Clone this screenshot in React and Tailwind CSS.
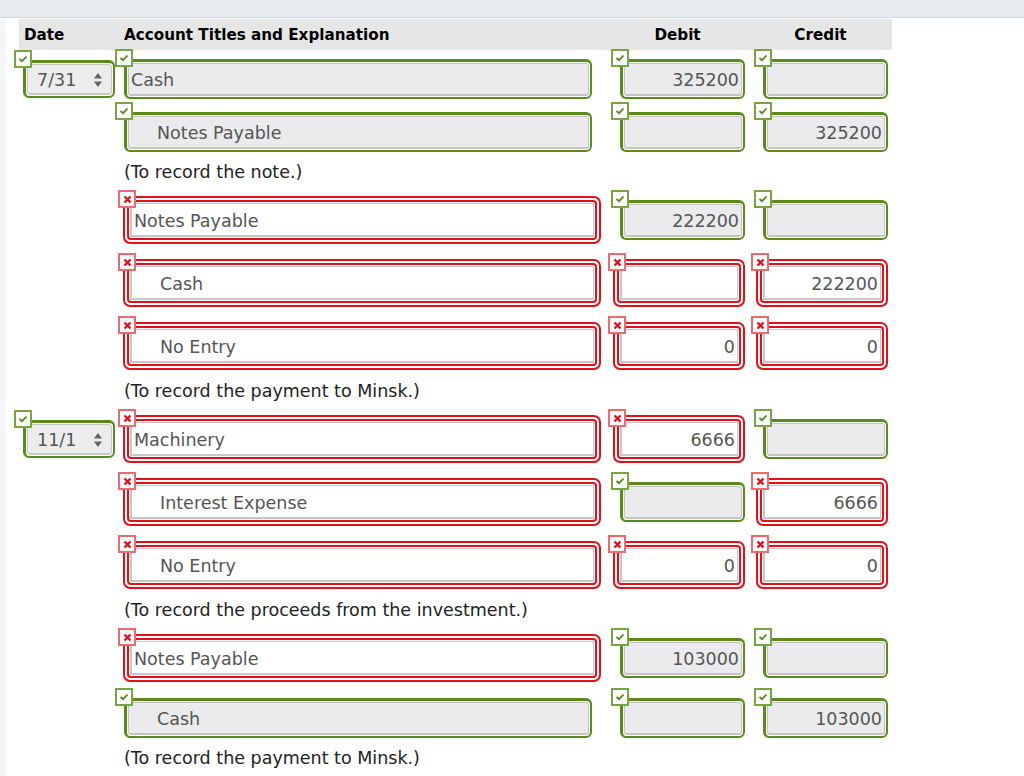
import React from 'react';

const rows = [
  { date: '7/31', mt: 'mt-[9px]', acct: { ok: true, text: 'Cash' }, debit: { ok: true, text: '325200' }, credit: { ok: true, text: '' } },
  { mt: 'mt-[13px]', acct: { ok: true, text: 'Notes Payable', indent: true }, debit: { ok: true, text: '' }, credit: { ok: true, text: '325200' } },
  { note: '(To record the note.)', mt: 'mt-[10px]' },
  { mt: 'mt-[14px]', acct: { ok: false, text: 'Notes Payable' }, debit: { ok: true, text: '222200' }, credit: { ok: true, text: '' } },
  { mt: 'mt-[15px]', acct: { ok: false, text: 'Cash', indent: true }, debit: { ok: false, text: '' }, credit: { ok: false, text: '222200' } },
  { mt: 'mt-[15px]', acct: { ok: false, text: 'No Entry', indent: true }, debit: { ok: false, text: '0' }, credit: { ok: false, text: '0' } },
  { note: '(To record the payment to Minsk.)', mt: 'mt-[11px]' },
  { date: '11/1', mt: 'mt-[14px]', acct: { ok: false, text: 'Machinery' }, debit: { ok: false, text: '6666' }, credit: { ok: true, text: '' } },
  { mt: 'mt-[15px]', acct: { ok: false, text: 'Interest Expense', indent: true }, debit: { ok: true, text: '' }, credit: { ok: false, text: '6666' } },
  { mt: 'mt-[15px]', acct: { ok: false, text: 'No Entry', indent: true }, debit: { ok: false, text: '0' }, credit: { ok: false, text: '0' } },
  { note: '(To record the proceeds from the investment.)', mt: 'mt-[11px]' },
  { mt: 'mt-[14px]', acct: { ok: false, text: 'Notes Payable' }, debit: { ok: true, text: '103000' }, credit: { ok: true, text: '' } },
  { mt: 'mt-[16px]', acct: { ok: true, text: 'Cash', indent: true }, debit: { ok: true, text: '' }, credit: { ok: true, text: '103000' } },
  { note: '(To record the payment to Minsk.)', mt: 'mt-[10px]' },
];

function Badge({ ok, pos }) {
  return (
    <span
      className={`absolute ${pos} z-10 flex h-[18px] w-[18px] items-center justify-center bg-white border-2 ${
        ok ? 'border-[#78a544]' : 'border-[#ec6a70]'
      }`}
    >
      {ok ? (
        <svg width="10" height="8" viewBox="0 0 10 8">
          <polyline points="1.5,4 4,6.2 8.5,1.5" fill="none" stroke="#4f8a18" strokeWidth="1.8" />
        </svg>
      ) : (
        <svg width="9" height="9" viewBox="0 0 9 9">
          <path d="M1.5 1.5 L7.5 7.5 M7.5 1.5 L1.5 7.5" stroke="#e3101a" strokeWidth="2.4" />
        </svg>
      )}
    </span>
  );
}

function Field({ ok, text, indent, right, wGreen, wRed }) {
  const pad = indent ? 'pl-[28px]' : right ? 'justify-end pr-[2px]' : 'pl-[2px]';
  if (ok) {
    return (
      <div className={`relative h-[40px] ${wGreen} rounded-[6px] border-t-[3px] border-l-[3px] border-r-2 border-b-2 border-[#5a8c1c] p-px`}>
        <Badge ok pos="-left-[12px] -top-[13px]" />
        <div className={`flex h-full items-center rounded-[3px] border border-b-2 border-[#c4c4c6] bg-[#ebebed] pt-[3px] text-[#555] ${pad}`}>
          {text}
        </div>
      </div>
    );
  }
  return (
    <div className={`relative h-[48px] ${wRed} rounded-[7px] border-2 border-[#e3101a] bg-white p-[2px]`}>
      <Badge pos="-left-[7px] -top-[8px]" />
      <div className="h-full rounded-[4px] border-2 border-[#e3101a] p-px">
        <div className={`flex h-full items-center border border-l-2 border-b-2 border-[#c8c8c8] bg-white pt-[3px] text-[#555] ${pad}`}>
          {text}
        </div>
      </div>
    </div>
  );
}

function DateSelect({ value }) {
  return (
    <div className="relative ml-[17px] h-[38px] w-[92px] rounded-[6px] border-t-[3px] border-l-[3px] border-r-2 border-b-2 border-[#5a8c1c] p-px">
      <Badge ok pos="-left-[12px] -top-[13px]" />
      <div className="flex h-full items-center justify-between rounded-[4px] border border-b-2 border-[#c8c8c8] bg-[#ececec] pl-[9px] pr-[8px] pt-[2px] text-[#555]">
        <span>{value}</span>
        <svg width="10" height="16" viewBox="0 0 10 16">
          <path d="M5 1 L9 6.5 L1 6.5 Z M5 15 L9 9.5 L1 9.5 Z" fill="#666" />
        </svg>
      </div>
    </div>
  );
}

function EntryRow({ row }) {
  const anyRed = !row.acct.ok || !row.debit.ok || !row.credit.ok;
  return (
    <div className={`flex items-center ${row.mt} ${anyRed ? 'h-[48px]' : 'h-[40px]'}`}>
      <div className="w-[110px] shrink-0">{row.date && <DateSelect value={row.date} />}</div>
      <div className="w-[490px] shrink-0">
        <div className={row.acct.ok ? 'ml-[8px]' : 'ml-[7px]'}>
          <Field {...row.acct} wGreen="w-[468px]" wRed="w-[478px]" />
        </div>
      </div>
      <div className="w-[143px] shrink-0">
        <div className={row.debit.ok ? 'ml-[14px]' : 'ml-[7px]'}>
          <Field {...row.debit} right wGreen="w-[125px]" wRed="w-[132px]" />
        </div>
      </div>
      <div className="w-[143px] shrink-0">
        <div className={row.credit.ok ? 'ml-[14px]' : 'ml-[7px]'}>
          <Field {...row.credit} right wGreen="w-[125px]" wRed="w-[132px]" />
        </div>
      </div>
    </div>
  );
}

export default function App() {
  return (
    <div className="min-h-[776px] bg-white text-[17.5px] text-[#222]" style={{ fontFamily: '"DejaVu Sans", Verdana, sans-serif' }}>
      <div className="h-[18px] border-b border-[#cdd5de] bg-[#e8ecf0]" />
      <div className="min-h-[758px] border-l-[6px] border-[#f4f7fa] pb-4">
        {/* header */}
        <div className="ml-[13px] mt-px flex h-[31px] w-[873px] items-center bg-[#e6e6e6] pt-[2px] text-[15.2px] font-bold text-black">
          <div className="w-[97px] pl-[5px]">Date</div>
          <div className="w-[490px] pl-[8px]">Account Titles and Explanation</div>
          <div className="w-[143px] text-center">Debit</div>
          <div className="w-[143px] text-center">Credit</div>
        </div>

        {rows.map((row, i) =>
          row.note ? (
            <div key={i} className={`${row.mt} ml-[118px] h-[20px] leading-[20px]`}>
              {row.note}
            </div>
          ) : (
            <EntryRow key={i} row={row} />
          )
        )}
      </div>
    </div>
  );
}
